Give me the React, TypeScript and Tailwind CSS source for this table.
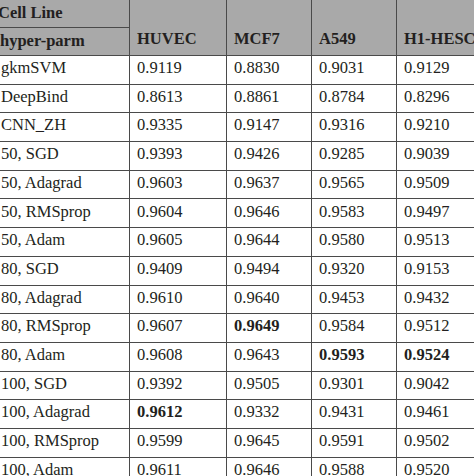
import clsx from 'clsx';

type Row = { name: string; vals: string[]; bold?: number[] };

const rows: Row[] = [
    { name: 'gkmSVM', vals: ['0.9119', '0.8830', '0.9031', '0.9129'] },
    { name: 'DeepBind', vals: ['0.8613', '0.8861', '0.8784', '0.8296'] },
    { name: 'CNN_ZH', vals: ['0.9335', '0.9147', '0.9316', '0.9210'] },
    { name: '50, SGD', vals: ['0.9393', '0.9426', '0.9285', '0.9039'] },
    { name: '50, Adagrad', vals: ['0.9603', '0.9637', '0.9565', '0.9509'] },
    { name: '50, RMSprop', vals: ['0.9604', '0.9646', '0.9583', '0.9497'] },
    { name: '50, Adam', vals: ['0.9605', '0.9644', '0.9580', '0.9513'] },
    { name: '80, SGD', vals: ['0.9409', '0.9494', '0.9320', '0.9153'] },
    { name: '80, Adagrad', vals: ['0.9610', '0.9640', '0.9453', '0.9432'] },
    { name: '80, RMSprop', vals: ['0.9607', '0.9649', '0.9584', '0.9512'], bold: [1] },
    { name: '80, Adam', vals: ['0.9608', '0.9643', '0.9593', '0.9524'], bold: [2, 3] },
    { name: '100, SGD', vals: ['0.9392', '0.9505', '0.9301', '0.9042'] },
    { name: '100, Adagrad', vals: ['0.9612', '0.9332', '0.9431', '0.9461'], bold: [0] },
    { name: '100, RMSprop', vals: ['0.9599', '0.9645', '0.9591', '0.9502'] },
    { name: '100, Adam', vals: ['0.9611', '0.9646', '0.9588', '0.9520'] },
];

const cols = ['HUVEC', 'MCF7', 'A549', 'H1-HESC'];

export default function App() {
    return (
        <div className="w-[474px] h-[476px] overflow-hidden bg-white">
            <div className="-ml-[7px] w-[490px] grid grid-cols-[136px_96px_84px_84px_86px] grid-rows-[27px_27px_repeat(15,27.7px)] gap-px bg-[#4a4a4a] text-[16.5px] leading-none text-[#231f20] font-['Liberation_Serif','DejaVu_Serif',serif]">
                {/* header */}
                <div className="bg-[#a9a9a9] flex items-center pl-[5px] font-bold">Cell Line</div>
                {cols.map((c) => (
                    <div key={c} className="row-span-2 bg-[#a9a9a9] flex items-end pb-[8px] pl-[7px] font-bold whitespace-nowrap">
                        {c}
                    </div>
                ))}
                <div className="bg-[#a9a9a9] flex items-center pl-[7px] font-bold">hyper-parm</div>

                {/* data rows */}
                {rows.map((r) => (
                    <>
                        <div key={r.name} className="bg-white flex items-center pl-[8px] pb-[3px] whitespace-nowrap">
                            {r.name}
                        </div>
                        {r.vals.map((v, i) => (
                            <div
                                key={r.name + i}
                                className={clsx('bg-white flex items-center pl-[7px] pb-[3px]', r.bold?.includes(i) && 'font-bold')}
                            >
                                {v}
                            </div>
                        ))}
                    </>
                ))}
            </div>
        </div>
    );
}
